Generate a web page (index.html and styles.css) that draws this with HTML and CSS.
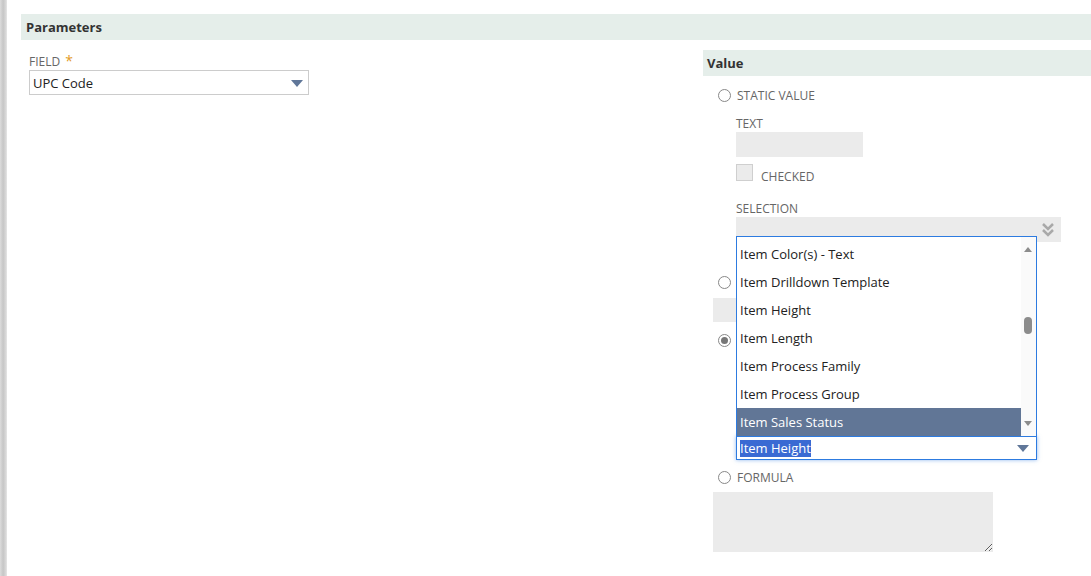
FILE: index.html
```html
<!DOCTYPE html>
<html lang="en">
<head>
    <meta charset="UTF-8">
    <title>Parameters</title>
    <link rel="stylesheet" href="styles.css">
</head>
<body>
    <div class="side-bar"></div>
    <div class="main">
        <div class="section-header params-header">Parameters</div>

        <div class="columns">
            <div class="left-col">
                <div class="field-label">Field <span class="required">*</span></div>
                <div class="select-box upc-select">
                    <span>UPC Code</span>
                    <span class="arrow"></span>
                </div>
            </div>

            <div class="right-col">
                <div class="section-header value-header">Value</div>

                <div class="value-body">
                    <div class="radio-row first-radio">
                        <span class="radio"></span>
                        <span class="radio-label">Static Value</span>
                    </div>

                    <div class="sub">
                        <div class="field-label text-label">Text</div>
                        <div class="gray-input text-input"></div>

                        <div class="check-row">
                            <span class="checkbox"></span>
                            <span class="check-label">Checked</span>
                        </div>

                        <div class="field-label selection-label">Selection</div>
                        <div class="gray-input selection-input">
                            <svg class="chevrons" width="12" height="16" viewBox="0 0 12 16">
                                <polyline points="1,2 6,7 11,2" fill="none" stroke="#a9a9a9" stroke-width="2.5"/>
                                <polyline points="1,8 6,13 11,8" fill="none" stroke="#a9a9a9" stroke-width="2.5"/>
                            </svg>
                        </div>
                    </div>

                    <!-- labels of these two options sit under the open list -->
                    <div class="radio-row second-radio">
                        <span class="radio"></span>
                    </div>
                    <div class="gray-input param-input"></div>

                    <div class="radio-row third-radio">
                        <span class="radio checked"></span>
                    </div>

                    <div class="sub">
                        <div class="dropdown-wrap">
                            <div class="dropdown-list">
                                <div class="list-items">
                                    <div class="list-item">Item Color(s) - Text</div>
                                    <div class="list-item">Item Drilldown Template</div>
                                    <div class="list-item">Item Height</div>
                                    <div class="list-item">Item Length</div>
                                    <div class="list-item">Item Process Family</div>
                                    <div class="list-item">Item Process Group</div>
                                    <div class="list-item selected">Item Sales Status</div>
                                </div>
                                <div class="scrollbar">
                                    <span class="scroll-up"></span>
                                    <span class="scroll-thumb"></span>
                                    <span class="scroll-down"></span>
                                </div>
                            </div>
                            <div class="select-box active-select">
                                <span class="highlight">Item Height</span>
                                <span class="arrow"></span>
                            </div>
                        </div>
                    </div>

                    <div class="radio-row formula-radio">
                        <span class="radio"></span>
                        <span class="radio-label">Formula</span>
                    </div>
                    <textarea class="formula-input"></textarea>
                </div>
            </div>
        </div>
    </div>
</body>
</html>
```

FILE: styles.css
```css
body {
    margin: 0;
    font-family: "Open Sans", Arial, sans-serif;
    font-size: 13px;
    color: #222;
    background-color: white;
    display: flex;
    height: 576px;
    overflow: hidden;
}

.side-bar {
    flex: none;
    width: 7px;
    background: linear-gradient(to right, #dcdcdc, #c6c6c6 45%, #d4d4d4 75%, #e6e6e6);
}

.main {
    flex: 1;
    padding-top: 14px;
    padding-left: 14px;
}

.section-header {
    height: 26px;
    line-height: 26px;
    background-color: #e5eeea;
    font-weight: bold;
    font-size: 13px;
    color: #333;
}

.params-header {
    padding-left: 5px;
}

.value-header {
    padding-left: 4px;
}

.columns {
    display: flex;
    margin-top: 10px;
}

.left-col {
    width: 674px;
    padding-left: 8px;
    padding-top: 3px;
}

.right-col {
    flex: 1;
}

.field-label {
    font-size: 12px;
    line-height: 16px;
    height: 16px;
    color: #666;
    text-transform: uppercase;
}

.required {
    color: #e39a26;
    font-size: 14px;
    margin-left: 2px;
}

.select-box {
    position: relative;
    box-sizing: border-box;
    display: flex;
    align-items: center;
    border: 1px solid #cccccc;
    background-color: white;
    padding-left: 3px;
}

.upc-select {
    width: 280px;
    height: 25px;
    margin-top: 1px;
}

.arrow {
    position: absolute;
    top: 50%;
    margin-top: -3px;
    right: 7px;
    width: 0;
    height: 0;
    border-left: 6px solid transparent;
    border-right: 6px solid transparent;
    border-top: 7px solid #607799;
}

.upc-select .arrow {
    right: 5px;
}

.value-body {
    padding-left: 10px;
}

.radio-row {
    display: flex;
    align-items: center;
    height: 16px;
    padding-left: 5px;
}

.radio {
    box-sizing: border-box;
    width: 13px;
    height: 13px;
    border: 1px solid #888;
    border-radius: 50%;
    background-color: white;
    position: relative;
}

.radio.checked::after {
    content: "";
    position: absolute;
    left: 2px;
    top: 2px;
    width: 7px;
    height: 7px;
    border-radius: 50%;
    background-color: #777;
}

.radio-label {
    margin-left: 6px;
    font-size: 12px;
    color: #666;
    text-transform: uppercase;
}

.first-radio {
    margin-top: 11px;
}

.sub {
    padding-left: 23px;
}

.text-label {
    margin-top: 13px;
}

.gray-input {
    box-sizing: border-box;
    background-color: #ebebeb;
    height: 25px;
}

.text-input {
    width: 127px;
}

.check-row {
    display: flex;
    align-items: flex-start;
    height: 20px;
    margin-top: 7px;
}

.checkbox {
    box-sizing: border-box;
    width: 17px;
    height: 17px;
    border: 1px solid #cfcfcf;
    background-color: #ebebeb;
}

.check-label {
    margin-left: 8px;
    margin-top: 5px;
    line-height: 16px;
    font-size: 12px;
    color: #666;
    text-transform: uppercase;
}

.selection-label {
    margin-top: 17px;
}

.selection-input {
    position: relative;
    width: 325px;
}

.chevrons {
    position: absolute;
    right: 7px;
    top: 5px;
}

.second-radio {
    margin-top: 32px;
}

.param-input {
    width: 280px;
    height: 24px;
    margin-top: 8px;
}

.third-radio {
    margin-top: 10px;
}

.dropdown-wrap {
    position: relative;
    width: 301px;
    margin-top: 88px;
}

.active-select {
    width: 301px;
    height: 24px;
    border-color: #2d7be0;
    box-shadow: 0 0 4px rgba(45, 123, 224, 0.55);
}

.highlight {
    background-color: #3a6ad3;
    color: white;
    line-height: 17px;
}

.dropdown-list {
    position: absolute;
    left: 0;
    bottom: 100%;
    box-sizing: border-box;
    width: 301px;
    height: 200px;
    border: 1px solid #2d7be0;
    border-bottom: none;
    background-color: white;
    z-index: 2;
}

.list-items {
    margin-right: 15px;
    padding-top: 3px;
}

.list-item {
    height: 28px;
    line-height: 28px;
    padding-left: 3px;
    color: #222;
    white-space: nowrap;
}

.list-item.selected {
    background-color: #617696;
    color: white;
}

.scrollbar {
    position: absolute;
    top: 0;
    right: 0;
    bottom: 0;
    width: 15px;
    background-color: #fafafa;
}

.scroll-up,
.scroll-down {
    position: absolute;
    left: 3px;
    width: 0;
    height: 0;
    border-left: 4px solid transparent;
    border-right: 4px solid transparent;
}

.scroll-up {
    top: 10px;
    border-bottom: 5px solid #8c8c8c;
}

.scroll-down {
    bottom: 10px;
    border-top: 5px solid #8c8c8c;
}

.scroll-thumb {
    position: absolute;
    left: 3px;
    top: 80px;
    width: 8px;
    height: 17px;
    border-radius: 4px;
    background-color: #8c8c8c;
}

.formula-radio {
    margin-top: 9px;
}

.formula-input {
    display: block;
    box-sizing: border-box;
    width: 280px;
    height: 60px;
    margin: 7px 0 0 0;
    border: none;
    background-color: #ebebeb;
    font-family: "Open Sans", Arial, sans-serif;
}
```
